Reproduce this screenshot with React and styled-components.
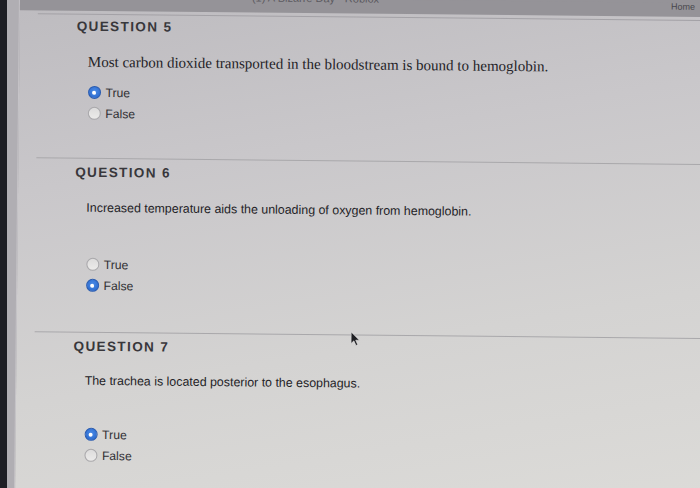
import React from "react";
import styled, { createGlobalStyle } from "styled-components";

const questions = [
  {
    id: 5,
    text: "Most carbon dioxide transported in the bloodstream is bound to hemoglobin.",
    serif: true,
    answer: "True",
    top: 4.4,
    promptGap: 17.6,
    optionsGap: 11.1,
    bottom: 34.2,
  },
  {
    id: 6,
    text: "Increased temperature aids the unloading of oxygen from hemoglobin.",
    answer: "False",
    top: 6.1,
    promptGap: 18.6,
    optionsGap: 38.5,
    bottom: 35.5,
  },
  {
    id: 7,
    text: "The trachea is located posterior to the esophagus.",
    answer: "True",
    top: 6.5,
    promptGap: 17.3,
    optionsGap: 35.7,
    bottom: 20,
  },
];

const GlobalStyle = createGlobalStyle`
  html, body {
    margin: 0;
    padding: 0;
    height: 100%;
    overflow: hidden;
    background: #959398;
  }
  #root {
    height: 100%;
  }
`;

const Page = styled.div`
  display: flex;
  height: 100vh;
  font-family: "Liberation Sans", Arial, sans-serif;
`;

const Bezel = styled.div`
  width: 7px;
  flex-shrink: 0;
  background: #1d1e24;
  position: relative;
  z-index: 2;
`;

// the photo is taken slightly tilted
const Frame = styled.div`
  display: flex;
  flex-shrink: 0;
  width: 706px;
  height: 500px;
  margin-top: -4px;
  transform: rotate(0.57deg);
  transform-origin: 0 0;
`;

const SideStrip = styled.div`
  width: 12px;
  flex-shrink: 0;
  background: #b0aeb3;
  border-right: 1px solid #c6c4c8;
`;

const Screen = styled.div`
  flex: 1;
  min-width: 0;
  display: flex;
  flex-direction: column;
`;

const TopBar = styled.div`
  height: 14px;
  flex-shrink: 0;
  display: flex;
  overflow: hidden;
  background: #959398;
`;

const Title = styled.div`
  margin-left: 232px;
  margin-top: -7px;
  font-size: 11px;
  line-height: 13px;
  color: #5c5a60;
  white-space: nowrap;
`;

const Home = styled.div`
  margin-left: auto;
  margin-right: 18px;
  margin-top: -1px;
  font-size: 9px;
  line-height: 11px;
  color: #48474c;
`;

const Content = styled.div`
  flex: 1;
  position: relative;
  display: flex;
  flex-direction: column;
  background: linear-gradient(
    170deg,
    #bebcc0 0%,
    #c9c7ca 30%,
    #d4d3d2 65%,
    #dcdbd8 100%
  );
`;

const Rule = styled.div`
  flex-shrink: 0;
  height: 1px;
  margin: 3px 0 0 18px;
  background: #a3a1a6;
`;

const Divider = styled.div`
  flex-shrink: 0;
  height: 1px;
  margin-left: 18px;
  background: #a9a8ab;
`;

const Question = styled.section`
  padding: ${(p) => p.$top}px 0 ${(p) => p.$bottom}px 57px;
`;

const Heading = styled.h2`
  margin: 0;
  font-size: 13.5px;
  line-height: 16px;
  font-weight: bold;
  letter-spacing: 1.4px;
  color: #38373b;
`;

const Prompt = styled.p`
  margin: ${(p) => p.$gap}px 0 0 11.5px;
  font-family: ${(p) =>
    p.$serif ? '"Liberation Serif", "Times New Roman", serif' : '"Liberation Sans", Arial, sans-serif'};
  font-size: ${(p) => (p.$serif ? 15 : 12.4)}px;
  line-height: ${(p) => (p.$serif ? 18 : 16)}px;
  color: #242327;
  white-space: nowrap;
`;

const Options = styled.div`
  display: flex;
  flex-direction: column;
  margin: ${(p) => p.$gap}px 0 0 11.5px;
`;

const Option = styled.label`
  display: flex;
  align-items: center;
  gap: 5px;
  height: 21px;
  font-size: 12.2px;
  color: #313034;
`;

const Radio = styled.span`
  width: 13px;
  height: 13px;
  box-sizing: border-box;
  border-radius: 50%;
  display: flex;
  align-items: center;
  justify-content: center;
  border: 1px solid ${(p) => (p.$checked ? "#2a5cb0" : "#aaa9ac")};
  background: ${(p) =>
    p.$checked
      ? "radial-gradient(circle at 50% 40%, #4b8be6, #2463c9)"
      : "linear-gradient(#dddcdc, #ecebea)"};

  &::after {
    content: "";
    display: ${(p) => (p.$checked ? "block" : "none")};
    width: 4px;
    height: 4px;
    border-radius: 50%;
    background: #fff;
  }
`;

const Cursor = styled.svg`
  position: absolute;
  left: 334px;
  top: 318px;
  width: 10px;
  height: 15px;
`;

const App = () => {
  return (
    <>
      <GlobalStyle />
      <Page>
        <Bezel />
        <Frame>
          <SideStrip />
          <Screen>
            <TopBar>
              <Title>(1) A Bizarre Day - Roblox</Title>
              <Home>Home</Home>
            </TopBar>
            <Content>
              <Rule />
              {questions.map((q, i) => (
                <React.Fragment key={q.id}>
                  {i > 0 && <Divider />}
                  <Question $top={q.top} $bottom={q.bottom}>
                    <Heading>QUESTION {q.id}</Heading>
                    <Prompt $serif={q.serif} $gap={q.promptGap}>
                      {q.text}
                    </Prompt>
                    <Options $gap={q.optionsGap}>
                      {["True", "False"].map((opt) => (
                        <Option key={opt}>
                          <Radio $checked={q.answer === opt} />
                          {opt}
                        </Option>
                      ))}
                    </Options>
                  </Question>
                </React.Fragment>
              ))}
              <Cursor viewBox="0 0 10 15">
                <path
                  d="M0.5 0.5 L0.5 12 L3.3 9.4 L5.4 14 L7.2 13.2 L5.1 8.7 L8.8 8.7 Z"
                  fill="#1f1f23"
                  stroke="#e8e8e8"
                  strokeWidth="0.6"
                />
              </Cursor>
            </Content>
          </Screen>
        </Frame>
      </Page>
    </>
  );
};

export default App;
